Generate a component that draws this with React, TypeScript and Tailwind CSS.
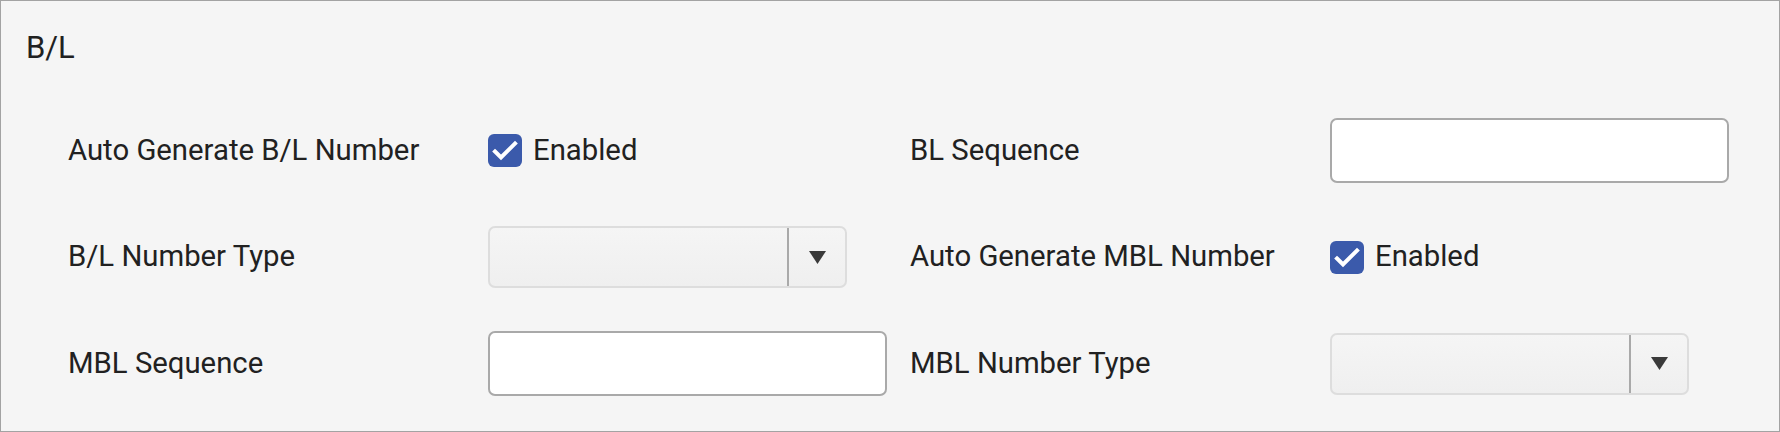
import React from "react";

function Check() {
  return (
    <div className="flex items-center gap-[11px]">
      <div className="w-[34px] h-[33px] rounded-[6px] bg-[#3b5aab] flex items-center justify-center">
        <svg width="34" height="33" viewBox="0 0 34 33">
          <polyline points="7,17.5 13,23.5 27,9.5" fill="none" stroke="#ffffff" strokeWidth="4" strokeLinecap="square" strokeLinejoin="miter" />
        </svg>
      </div>
      <span className="text-[29.3px] text-[#212121]">Enabled</span>
    </div>
  );
}

function TextInput() {
  return <div className="w-[399px] h-[65px] rounded-[7px] border-2 border-[#a9a9a9] bg-white" />;
}

function Select() {
  return (
    <div className="w-[359px] h-[62px] rounded-[7px] border-2 border-[#dddddd] bg-gradient-to-b from-[#f5f5f5] to-[#efefef] flex">
      <div className="flex-1" />
      <div className="w-[58px] border-l-2 border-[#a9a9a9] flex items-center justify-center">
        <svg width="17" height="13" viewBox="0 0 17 13">
          <polygon points="0,0 17,0 8.5,13" fill="#3a3a3a" />
        </svg>
      </div>
    </div>
  );
}

function Label({ children }: { children: React.ReactNode }) {
  return <div className="text-[29.3px] text-[#212121] whitespace-nowrap">{children}</div>;
}

export default function App() {
  return (
    <div
      className="w-[1780px] h-[432px] border border-[#a3a3a3] bg-[#f5f5f5] box-border"
      style={{ fontFamily: "Roboto, 'Noto Sans', sans-serif" }}
    >
      <div className="pt-[29px] pl-[25px] h-[65px] text-[31px] leading-[36px] text-[#212121]">B/L</div>
      <div className="mt-[52px] pl-[67px] grid grid-cols-[420px_422px_420px_1fr] auto-rows-[65px] gap-y-[41.5px] items-center">
        <Label>Auto Generate B/L Number</Label>
        <Check />
        <Label>BL Sequence</Label>
        <TextInput />

        <Label>B/L Number Type</Label>
        <Select />
        <Label>Auto Generate MBL Number</Label>
        <Check />

        <Label>MBL Sequence</Label>
        <TextInput />
        <Label>MBL Number Type</Label>
        <Select />
      </div>
    </div>
  );
}
